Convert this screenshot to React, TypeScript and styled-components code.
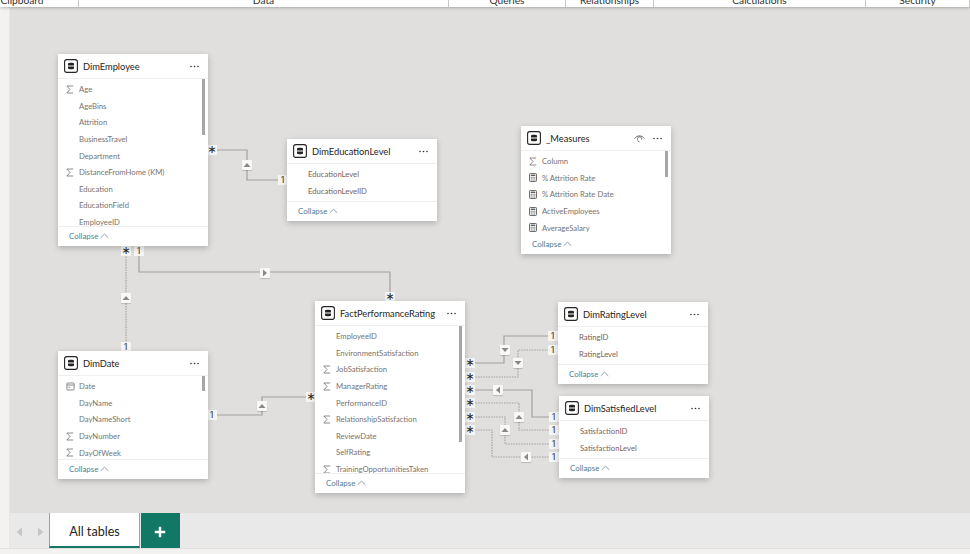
import React from "react";
import styled, {createGlobalStyle} from "styled-components";

const GREEN = "#117865";
const CANVAS_X = 10;
const CANVAS_Y = 7;

const GlobalStyle = createGlobalStyle`
    html, body {
        margin: 0;
        padding: 0;
        height: 100%;
        overflow: hidden;
        font-family: Lato, "Liberation Sans", sans-serif;
    }
    #root {
        height: 100%;
    }
`;

const Page = styled.div`
    display: flex;
    flex-direction: column;
    width: 970px;
    height: 554px;
    background-color: #f3f2f1;
`;

const Ribbon = styled.div`
    display: flex;
    flex: 0 0 7px;
    height: 7px;
    overflow: hidden;
    background-color: white;
    box-shadow: 0 1px 3px rgba(0, 0, 0, 0.25);
    position: relative;
    z-index: 2;
`;

const RibbonGroup = styled.div<{$width: number; $shift?: number}>`
    flex: 0 0 ${p => p.$width}px;
    box-sizing: border-box;
    padding-right: ${p => p.$shift ?? 0}px;
    border-right: 1px solid #c8c6c4;
    text-align: center;
    font-size: 10.2px;
    line-height: 14px;
    color: #323130;
`;

const RibbonLabel = styled.div`
    margin-top: -7px;
`;

const Main = styled.div`
    display: flex;
    flex: 1;
    min-height: 0;
`;

const Rail = styled.div`
    flex: 0 0 ${CANVAS_X - 1}px;
    background-color: #f3f2f1;
    border-right: 1px solid #e8e6e4;
`;

const Workspace = styled.div`
    display: flex;
    flex-direction: column;
    flex: 1;
    min-width: 0;
`;

const Canvas = styled.div`
    flex: 1;
    position: relative;
    overflow: hidden;
    background-color: #e0dfdd;
`;

const Wires = styled.svg`
    position: absolute;
    left: -${CANVAS_X}px;
    top: -${CANVAS_Y}px;
    width: 970px;
    height: 554px;
`;

const TabBar = styled.div`
    display: flex;
    flex: 0 0 35px;
    background-color: #e9e9e9;
`;

const TabArrows = styled.div`
    display: flex;
    flex: 0 0 39px;
    align-items: center;
    justify-content: space-between;
    box-sizing: border-box;
    padding: 3px 5px 0 6px;
`;

const Tab = styled.div`
    flex: 0 0 91px;
    box-sizing: border-box;
    display: flex;
    align-items: center;
    justify-content: center;
    padding-top: 4px;
    background-color: white;
    border-left: 1px solid #a19f9d;
    border-right: 1px solid #a19f9d;
    border-bottom: 2px solid ${GREEN};
    font-size: 12.6px;
    color: #252423;
`;

const AddTab = styled.div`
    flex: 0 0 39px;
    margin-left: 1px;
    display: flex;
    align-items: center;
    justify-content: center;
    padding: 2px 2px 0 0;
    box-sizing: border-box;
    background-color: ${GREEN};
`;

const StatusStrip = styled.div`
    flex: 0 0 6px;
    background-color: #f3f2f1;
    border-top: 1px solid #e1dfdd;
    box-sizing: border-box;
`;

const Card = styled.div<{$x: number; $y: number; $height: number}>`
    position: absolute;
    left: ${p => p.$x - CANVAS_X}px;
    top: ${p => p.$y - CANVAS_Y}px;
    width: 150px;
    height: ${p => p.$height}px;
    display: flex;
    flex-direction: column;
    background-color: white;
    box-shadow: 0 2px 6px rgba(0, 0, 0, 0.22);
`;

const CardHeader = styled.div`
    flex: 0 0 25px;
    box-sizing: border-box;
    display: flex;
    align-items: center;
    gap: 5px;
    padding: 0 9px 0 6px;
    border-bottom: 1px solid #f0efee;

    svg {
        flex-shrink: 0;
    }
`;

const CardTitle = styled.div`
    flex: 1;
    font-size: 9.3px;
    color: #252423;
    white-space: nowrap;
`;

const HeaderTools = styled.div`
    display: flex;
    align-items: center;
    gap: 8px;
`;

const FieldList = styled.div`
    flex: 1;
    min-height: 0;
    position: relative;
    overflow: hidden;
    padding-top: 2px;
`;

const Scrollbar = styled.div<{$top: number; $height: number}>`
    position: absolute;
    right: 3px;
    top: ${p => p.$top}px;
    width: 3px;
    height: ${p => p.$height}px;
    background-color: #a6a6a6;
`;

const Field = styled.div<{$linked?: boolean}>`
    height: 16.6px;
    display: flex;
    align-items: center;
    padding-left: 8px;
    font-size: 7.7px;
    color: ${p => (p.$linked ? "#7a625c" : "#767472")};
    white-space: nowrap;
`;

const FieldIcon = styled.div`
    flex: 0 0 13px;
    display: flex;
    align-items: center;
`;

const CardFooter = styled.div<{$plain?: boolean}>`
    flex: 0 0 20px;
    box-sizing: border-box;
    display: flex;
    align-items: center;
    gap: 2px;
    padding: 0 0 2px 11px;
    border-top: 1px solid ${p => (p.$plain ? "transparent" : "#f0efee")};
    font-size: 7.9px;
    color: #4d7f96;
`;

const Badge = styled.div<{$x: number; $y: number; $star?: boolean}>`
    position: absolute;
    left: ${p => p.$x - CANVAS_X - 5}px;
    top: ${p => p.$y - CANVAS_Y - 5}px;
    width: 10px;
    height: 10px;
    display: flex;
    align-items: center;
    justify-content: center;
    background-color: #f6f6f5;
    font-family: ${p => (p.$star ? '"DejaVu Sans"' : "Roboto")}, sans-serif;
    font-size: ${p => (p.$star ? 11 : 8.5)}px;
    font-weight: 400;
    line-height: 10px;
    color: #252423;
`;

const ArrowBadge = styled.div<{$x: number; $y: number}>`
    position: absolute;
    left: ${p => p.$x - CANVAS_X - 5}px;
    top: ${p => p.$y - CANVAS_Y - 5}px;
    width: 10px;
    height: 10px;
    display: flex;
    align-items: center;
    justify-content: center;
    border-radius: 1px;
    background-color: #f8f8f7;
    box-shadow: 0 1px 1px rgba(0, 0, 0, 0.18);
`;

const ArrowShape = styled.svg`
    width: 8px;
    height: 8px;
`;

type Direction = "up" | "down" | "left" | "right";

const ARROWS: Record<Direction, string> = {
    up: "0.5,6 7.5,6 4,2",
    down: "0.5,2 7.5,2 4,6",
    left: "6,0.5 6,7.5 2,4",
    right: "2,0.5 2,7.5 6,4",
};

const TableIcon = () => (
    <svg width="14" height="14" viewBox="0 0 14 14">
        <rect x="0.6" y="0.6" width="12.8" height="12.8" rx="2.2" fill="white" stroke="#252423" strokeWidth="1.1"/>
        <path d="M4 4.6C4 3.6 10 3.6 10 4.6V6.6H4Z M4 7.4H10V9.4C10 10.4 4 10.4 4 9.4Z" fill="#252423"/>
    </svg>
);

const Dots = () => (
    <svg width="9" height="3" viewBox="0 0 9 3">
        <circle cx="1" cy="1.5" r="0.8" fill="#323130"/>
        <circle cx="4.5" cy="1.5" r="0.8" fill="#323130"/>
        <circle cx="8" cy="1.5" r="0.8" fill="#323130"/>
    </svg>
);

const Eye = () => (
    <svg width="11" height="9" viewBox="0 0 11 9" fill="none" stroke="#484644" strokeWidth="0.8">
        <path d="M0.6 4.6C3 1 8 1 10.4 4.6"/>
        <path d="M3.6 5.6A2.1 2.1 0 1 1 7.6 5.6"/>
        <path d="M5.4 7.8A2.2 2.2 0 0 1 3.6 6.4"/>
    </svg>
);

const Sigma = () => (
    <svg width="8" height="9" viewBox="0 0 8 9" fill="none" stroke="#6e6c6a" strokeWidth="0.8">
        <path d="M7.2 1H0.8L4 4.5L0.8 8H7.2"/>
    </svg>
);

const CalendarIcon = () => (
    <svg width="9" height="9" viewBox="0 0 9 9" fill="none" stroke="#6e6c6a" strokeWidth="0.8">
        <rect x="0.9" y="1" width="7.2" height="7" rx="0.6"/>
        <path d="M0.9 3H8.1 M2.4 5.2H4.2"/>
    </svg>
);

const CalculatorIcon = () => (
    <svg width="8" height="9" viewBox="0 0 8 9">
        <rect x="0.5" y="0.5" width="7" height="8" rx="0.8" fill="white" stroke="#605e5c" strokeWidth="0.9"/>
        <rect x="1.7" y="1.6" width="4.6" height="1.5" fill="#605e5c"/>
        <path d="M1.7 4.4H6.3 M1.7 5.8H6.3 M1.7 7.2H6.3" stroke="#605e5c" strokeWidth="0.9" strokeDasharray="1 0.8"/>
    </svg>
);

const Chevron = () => (
    <svg width="9" height="6" viewBox="0 0 9 6" fill="none" stroke="#6f8a96" strokeWidth="0.8">
        <path d="M0.7 4.8L4.5 1.2L8.3 4.8"/>
    </svg>
);

type FieldKind = "sum" | "date" | "calc" | undefined;

type TableData = {
    name: string;
    x: number;
    y: number;
    height: number;
    fields: [string, FieldKind][];
    scroll?: [number, number];
    linked?: boolean;
    hidden?: boolean;
};

const TABLES: TableData[] = [
    {
        name: "DimEmployee", x: 58, y: 54, height: 192, scroll: [0, 56],
        fields: [
            ["Age", "sum"], ["AgeBins", undefined], ["Attrition", undefined], ["BusinessTravel", undefined],
            ["Department", undefined], ["DistanceFromHome (KM)", "sum"], ["Education", undefined],
            ["EducationField", undefined], ["EmployeeID", undefined],
        ],
    },
    {
        name: "DimEducationLevel", x: 287, y: 139, height: 82, linked: true,
        fields: [["EducationLevel", undefined], ["EducationLevelID", undefined]],
    },
    {
        name: "_Measures", x: 521, y: 126, height: 128, scroll: [0, 26], hidden: true,
        fields: [
            ["Column", "sum"], ["% Attrition Rate", "calc"], ["% Attrition Rate Date", "calc"],
            ["ActiveEmployees", "calc"], ["AverageSalary", "calc"],
        ],
    },
    {
        name: "FactPerformanceRating", x: 315, y: 301, height: 192, scroll: [0, 116],
        fields: [
            ["EmployeeID", undefined], ["EnvironmentSatisfaction", undefined], ["JobSatisfaction", "sum"],
            ["ManagerRating", "sum"], ["PerformanceID", undefined], ["RelationshipSatisfaction", "sum"],
            ["ReviewDate", undefined], ["SelfRating", undefined], ["TrainingOpportunitiesTaken", "sum"],
        ],
    },
    {
        name: "DimRatingLevel", x: 558, y: 302, height: 82, linked: true,
        fields: [["RatingID", undefined], ["RatingLevel", undefined]],
    },
    {
        name: "DimSatisfiedLevel", x: 559, y: 396, height: 82, linked: true,
        fields: [["SatisfactionID", undefined], ["SatisfactionLevel", undefined]],
    },
    {
        name: "DimDate", x: 58, y: 351, height: 128, scroll: [0, 15],
        fields: [
            ["Date", "date"], ["DayName", undefined], ["DayNameShort", undefined],
            ["DayNumber", "sum"], ["DayOfWeek", "sum"],
        ],
    },
];

const WIRES: {points: string; dotted?: boolean}[] = [
    {points: "208,150 247,150 247,180 287,180"},
    {points: "126,246 126,351", dotted: true},
    {points: "139,246 139,272 390,272 390,301"},
    {points: "208,415 262,415 262,397 315,397"},
    {points: "465,363 504,363 504,336 558,336"},
    {points: "465,377 518,377 518,350 558,350", dotted: true},
    {points: "465,390 532,390 532,417 559,417"},
    {points: "465,403 519,403 519,430 559,430", dotted: true},
    {points: "465,417 505,417 505,444 559,444", dotted: true},
    {points: "465,430 492,430 492,457 559,457", dotted: true},
];

const STARS: [number, number][] = [
    [212, 150], [126, 251], [390, 297], [311, 397],
    [470, 363], [470, 377], [470, 390], [470, 403], [470, 417], [470, 430],
];

const ONES: [number, number][] = [
    [283, 180], [139, 251], [126, 347], [212, 415],
    [553, 336], [553, 350], [554, 417], [554, 430], [554, 444], [554, 457],
];

const FLOW: [number, number, Direction][] = [
    [247, 165, "up"], [126, 298, "up"], [265, 273, "right"], [262, 406, "up"],
    [505, 350, "down"], [518, 363, "down"], [498, 390, "left"],
    [519, 417, "up"], [505, 430, "up"], [526, 457, "left"],
];

const kindIcon = (kind: FieldKind) => {
    if (kind === "sum") return <Sigma/>;
    if (kind === "date") return <CalendarIcon/>;
    if (kind === "calc") return <CalculatorIcon/>;
    return null;
};

const TableCard = ({table}: {table: TableData}) => (
    <Card $x={table.x} $y={table.y} $height={table.height}>
        <CardHeader>
            <TableIcon/>
            <CardTitle>{table.name}</CardTitle>
            <HeaderTools>
                {table.hidden && <Eye/>}
                <Dots/>
            </HeaderTools>
        </CardHeader>
        <FieldList>
            {table.fields.map(([name, kind]) => (
                <Field key={name} $linked={table.linked}>
                    <FieldIcon>{kindIcon(kind)}</FieldIcon>
                    {name}
                </Field>
            ))}
            {table.scroll && <Scrollbar $top={table.scroll[0]} $height={table.scroll[1]}/>}
        </FieldList>
        <CardFooter $plain={table.hidden}>
            Collapse <Chevron/>
        </CardFooter>
    </Card>
);

export default function App() {
    return (
        <Page>
            <GlobalStyle/>
            <Ribbon>
                <RibbonGroup $width={79} $shift={34}><RibbonLabel>Clipboard</RibbonLabel></RibbonGroup>
                <RibbonGroup $width={370}><RibbonLabel>Data</RibbonLabel></RibbonGroup>
                <RibbonGroup $width={117}><RibbonLabel>Queries</RibbonLabel></RibbonGroup>
                <RibbonGroup $width={88}><RibbonLabel>Relationships</RibbonLabel></RibbonGroup>
                <RibbonGroup $width={212}><RibbonLabel>Calculations</RibbonLabel></RibbonGroup>
                <RibbonGroup $width={104}><RibbonLabel>Security</RibbonLabel></RibbonGroup>
            </Ribbon>
            <Main>
                <Rail/>
                <Workspace>
                    <Canvas>
                        <Wires viewBox="0 0 970 554">
                            {WIRES.map(wire => (
                                <polyline
                                    key={wire.points}
                                    points={wire.points}
                                    fill="none"
                                    stroke={wire.dotted ? "#a8a6a4" : "#a3a19f"}
                                    strokeWidth="1.2"
                                    strokeDasharray={wire.dotted ? "1.6 1" : undefined}
                                />
                            ))}
                        </Wires>
                        {STARS.map(([x, y]) => <Badge key={`s${x}-${y}`} $x={x} $y={y} $star>∗</Badge>)}
                        {ONES.map(([x, y]) => <Badge key={`o${x}-${y}`} $x={x} $y={y}>1</Badge>)}
                        {FLOW.map(([x, y, direction]) => (
                            <ArrowBadge key={`f${x}-${y}`} $x={x} $y={y}>
                                <ArrowShape viewBox="0 0 8 8">
                                    <polygon points={ARROWS[direction]} fill="#8a8886"/>
                                </ArrowShape>
                            </ArrowBadge>
                        ))}
                        {TABLES.map(table => <TableCard key={table.name} table={table}/>)}
                    </Canvas>
                    <TabBar>
                        <TabArrows>
                            <svg width="7" height="10" viewBox="0 0 7 10"><polygon points="6,0.5 6,9.5 0.5,5" fill="#c8c6c4"/></svg>
                            <svg width="7" height="10" viewBox="0 0 7 10"><polygon points="1,0.5 1,9.5 6.5,5" fill="#c8c6c4"/></svg>
                        </TabArrows>
                        <Tab>All tables</Tab>
                        <AddTab>
                            <svg width="12" height="12" viewBox="0 0 12 12"><path d="M6 0.8V11.2 M0.8 6H11.2" stroke="white" strokeWidth="2.4"/></svg>
                        </AddTab>
                    </TabBar>
                </Workspace>
            </Main>
            <StatusStrip/>
        </Page>
    );
}
